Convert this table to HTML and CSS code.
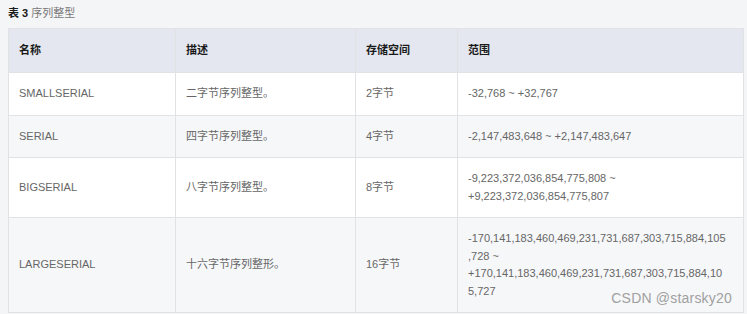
FILE: index.html
```html
<!DOCTYPE html>
<html lang="zh">
<head>
<meta charset="utf-8">
<link rel="stylesheet" href="styles.css">
</head>
<body>
<div class="page">
  <div class="caption"><b>表 3</b> 序列整型</div>
  <table class="tbl">
    <colgroup>
      <col class="c1"><col class="c2"><col class="c3"><col class="c4">
    </colgroup>
    <thead>
      <tr><th>名称</th><th>描述</th><th>存储空间</th><th>范围</th></tr>
    </thead>
    <tbody>
      <tr><td>SMALLSERIAL</td><td>二字节序列整型。</td><td>2字节</td><td class="rng">-32,768 ~ +32,767</td></tr>
      <tr class="alt"><td>SERIAL</td><td>四字节序列整型。</td><td>4字节</td><td class="rng">-2,147,483,648 ~ +2,147,483,647</td></tr>
      <tr><td>BIGSERIAL</td><td>八字节序列整型。</td><td>8字节</td><td class="rng">-9,223,372,036,854,775,808 ~ +9,223,372,036,854,775,807</td></tr>
      <tr class="alt"><td>LARGESERIAL</td><td>十六字节序列整形。</td><td>16字节</td><td class="rng">-170,141,183,460,469,231,731,687,303,715,884,105,728 ~ +170,141,183,460,469,231,731,687,303,715,884,105,727</td></tr>
    </tbody>
  </table>
  <div class="watermark">CSDN @starsky20</div>
</div>
</body>
</html>
```
FILE: styles.css
```css
html, body {
  margin: 0;
  padding: 0;
  background: #f4f5f7;
}
body {
  font-family: "Liberation Sans", Arial, "Noto Sans CJK SC", sans-serif;
  font-size: 11px;
  color: #666;
}
.page {
  position: relative;
  width: 747px;
  height: 314px;
  padding: 0 8px;
  box-sizing: border-box;
}
.caption {
  height: 28px;
  line-height: 26px;
  color: #777;
  font-size: 11px;
}
.caption b {
  color: #1a1a1a;
  font-weight: bold;
}
.tbl {
  border-collapse: collapse;
  table-layout: fixed;
  width: 735px;
  background: #fff;
}
.c1 { width: 167px; }
.c2 { width: 180px; }
.c3 { width: 102px; }
.c4 { width: 286px; }
.tbl th, .tbl td {
  border: 1px solid #e1e2e6;
  text-align: left;
  vertical-align: middle;
  padding: 12px 10px;
  line-height: 17.5px;
}
.tbl th {
  background: #e4e7ef;
  color: #1a1a1a;
  font-weight: bold;
  height: 44px;
  box-sizing: border-box;
  padding: 0 10px;
}
.tbl td {
  color: #666;
}
.tbl tr.alt td {
  background: #f6f7f9;
}
.tbl td.rng {
  overflow-wrap: break-word;
  padding-right: 16px;
}
.watermark {
  position: absolute;
  right: 15px;
  bottom: 8px;
  font-size: 14px;
  color: #a0a0a0;
  letter-spacing: 0.2px;
}
```
